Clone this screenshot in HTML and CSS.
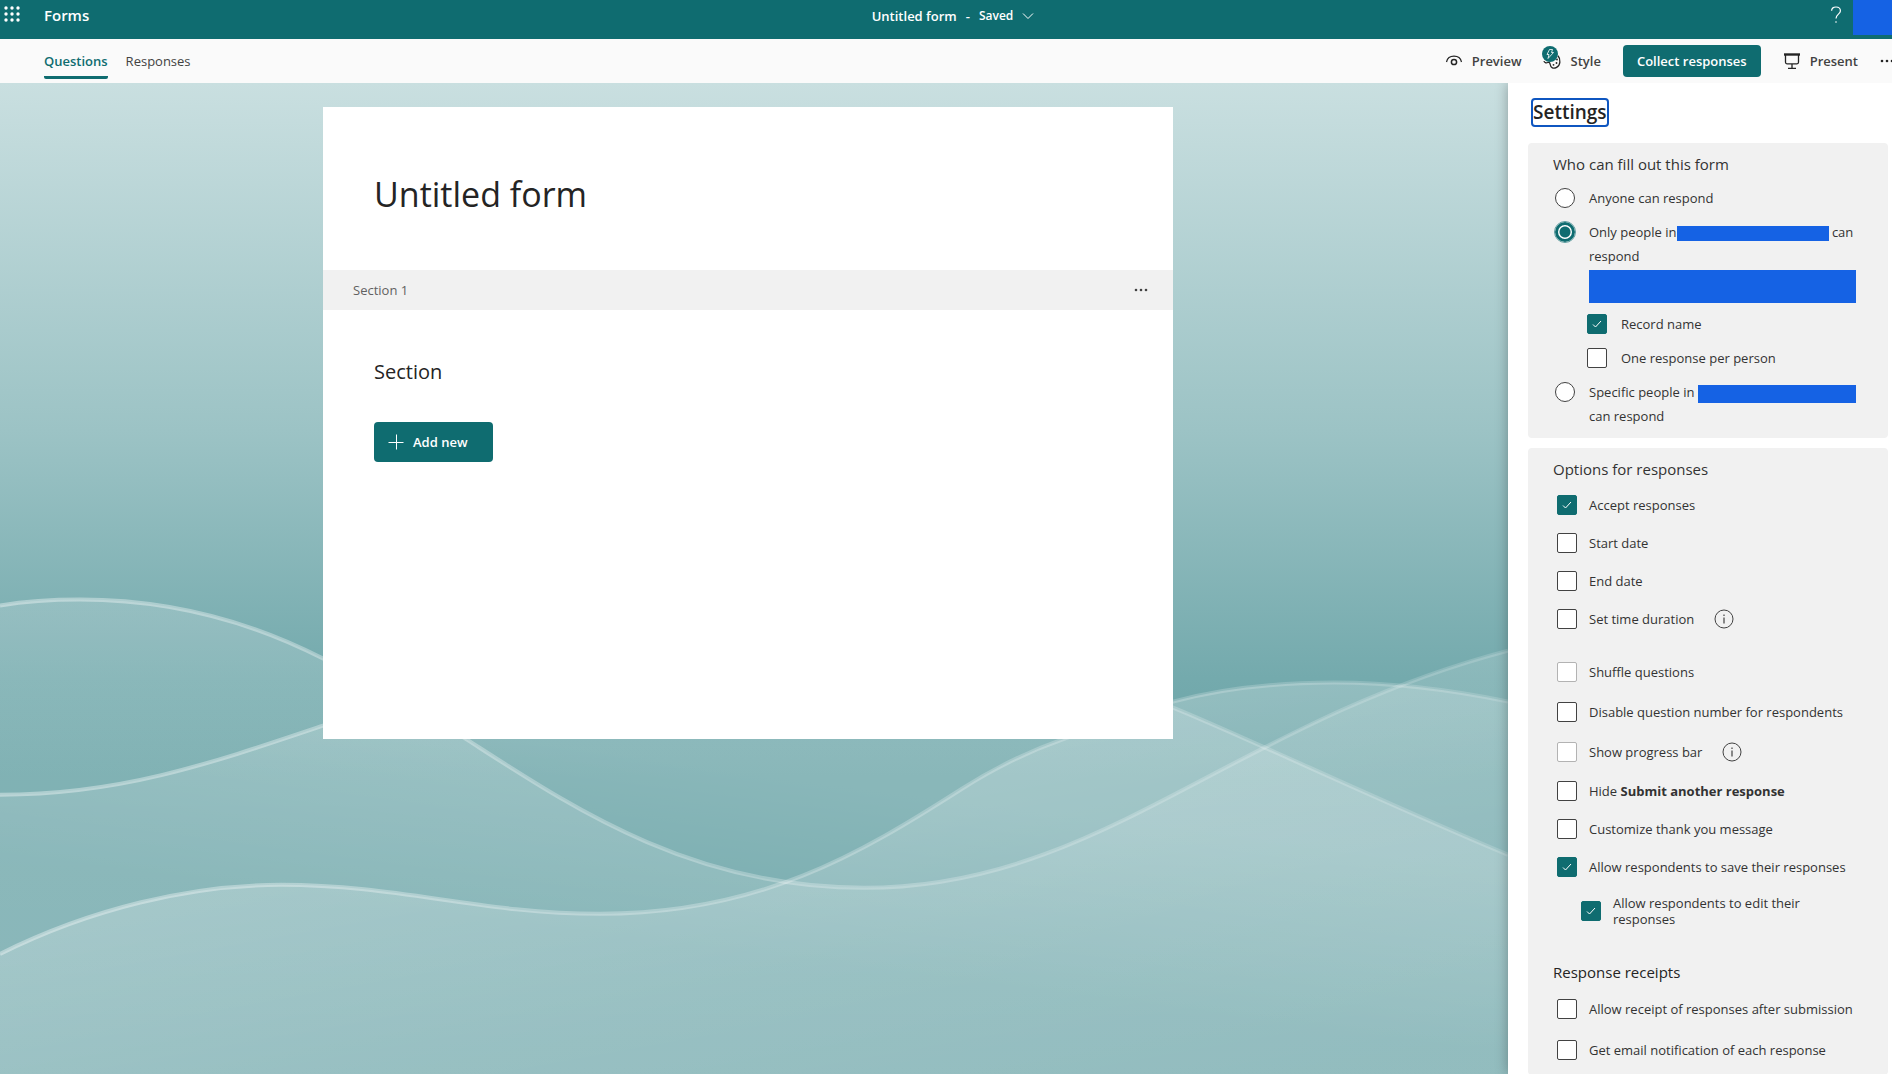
FILE: index.html
```html
<!DOCTYPE html>
<html lang="en">
<head>
<meta charset="utf-8">
<title>Untitled form</title>
<link rel="stylesheet" href="styles.css">
</head>
<body>

<header class="topbar">
  <button class="waffle" aria-label="App launcher">
    <svg width="16" height="16" viewBox="0 0 16 16" fill="#fff">
      <circle cx="2" cy="2" r="1.7"/><circle cx="8" cy="2" r="1.7"/><circle cx="14" cy="2" r="1.7"/>
      <circle cx="2" cy="8" r="1.7"/><circle cx="8" cy="8" r="1.7"/><circle cx="14" cy="8" r="1.7"/>
      <circle cx="2" cy="14" r="1.7"/><circle cx="8" cy="14" r="1.7"/><circle cx="14" cy="14" r="1.7"/>
    </svg>
  </button>
  <a class="brand" href="#">Forms</a>
  <button class="doc-title">
    <span>Untitled form</span><span>-</span><span class="saved">Saved</span>
    <svg width="12" height="8" viewBox="0 0 12 8" fill="none" stroke="#fff"><path d="M1 1.5 6 6.5 11 1.5"/></svg>
  </button>
  <button class="help" aria-label="Help">
    <svg width="12" height="18" viewBox="0 0 12 18" fill="none" stroke="#fff" stroke-width="1.2"><path d="M1.6 4.8C1.6 2.4 3.4 1 6 1s4.4 1.5 4.4 3.9C10.4 8.2 6 8.2 6 12.5"/><path d="M6 15.2v1.6"/></svg>
  </button>
  <div class="account"></div>
</header>

<nav class="toolbar">
  <a class="tab selected" href="#">Questions</a>
  <a class="tab" href="#">Responses</a>
  <div class="commands">
    <button class="command preview">
      <svg width="18" height="16" viewBox="0 0 18 16" fill="none" stroke="#242424" stroke-width="1.2"><path d="M1.5 9C2.3 5.3 5.3 3.2 9 3.2s6.7 2.1 7.5 5.8"/><circle cx="9" cy="9" r="2.6" stroke-width="1.5"/></svg>
      Preview
    </button>
    <button class="command style">
      <svg width="20" height="30" viewBox="0 0 20 30" fill="none" stroke="#242424" stroke-width="1.3">
        <path d="M2 15c.3 1.6 2 2.2 3.8 1.5 1.6-.6 2.200.4 2.400 2 .5 3.400 3.300 4.400 6 3.200 4.400-2 4.800-8.600 1.800-12"/>
        <circle cx="11.5" cy="18.8" r=".9" fill="#242424" stroke="none"/><circle cx="14.5" cy="17" r=".9" fill="#242424" stroke="none"/><circle cx="15" cy="13.5" r=".9" fill="#242424" stroke="none"/>
        <circle cx="8" cy="8" r="8" fill="#0f6c70" stroke="none"/>
        <path d="M7.5 3.5h3L9.5 6.5h2L6 12.5l1-4H5z" stroke="#fff" stroke-width=".8"/>
      </svg>
      Style
    </button>
    <button class="command collect">Collect responses</button>
    <button class="command present">
      <svg width="18" height="18" viewBox="0 0 18 18" fill="none" stroke="#242424" stroke-width="1.3"><path d="M1 2.5h16" stroke-width="2.4"/><path d="M2.5 3v7.3c0 1 .5 1.5 1.5 1.5h10c1 0 1.5-.5 1.5-1.5V3M9 12v4M5 16.3h8"/></svg>
      Present
    </button>
    <button class="more" aria-label="More options">
      <svg width="14" height="4" viewBox="0 0 14 4" fill="#242424"><circle cx="2" cy="2" r="1.3"/><circle cx="7" cy="2" r="1.3"/><circle cx="12" cy="2" r="1.3"/></svg>
    </button>
  </div>
</nav>

<div class="workspace">
  <main class="canvas">
    <svg class="waves" viewBox="0 0 1508 990" preserveAspectRatio="none">
      <defs>
        <linearGradient id="fillA" gradientUnits="userSpaceOnUse" x1="0" y1="517" x2="0" y2="990">
          <stop offset="0" stop-color="#fff" stop-opacity=".17"/><stop offset="1" stop-color="#fff" stop-opacity=".12"/>
        </linearGradient>
        <linearGradient id="fillB" gradientUnits="userSpaceOnUse" x1="0" y1="590" x2="-24" y2="775">
          <stop offset="0" stop-color="#fff" stop-opacity=".21"/><stop offset="1" stop-color="#fff" stop-opacity=".09"/>
        </linearGradient>
        <linearGradient id="fillC" gradientUnits="userSpaceOnUse" x1="0" y1="815" x2="72" y2="1215">
          <stop offset="0" stop-color="#fff" stop-opacity=".24"/><stop offset=".55" stop-color="#fff" stop-opacity=".14"/><stop offset="1" stop-color="#fff" stop-opacity=".09"/>
        </linearGradient>
        <linearGradient id="line" gradientUnits="userSpaceOnUse" x1="0" y1="0" x2="1508" y2="0">
          <stop offset="0" stop-color="#fff" stop-opacity=".38"/><stop offset="1" stop-color="#fff" stop-opacity=".16"/>
        </linearGradient>
      </defs>
      <path fill="url(#fillA)" d="M0 522C30 517 50 516 80 516C165 516 245 535 323 575C370 599 420 626 467 656C570 722 690 804 864 804C1100 804 1230 640 1508 567V990H0Z"/>
      <path fill="url(#fillB)" d="M0 711C120 711 210 680 323 642C520 570 620 530 780 530C950 530 1050 560 1173 624C1240 651 1390 722 1508 771V990H0Z"/>
      <path fill="url(#fillC)" d="M0 870C90 825 190 801 281 801C400 801 480 830 600 830C760 830 860 770 962 705C995 684 1028 668 1062 656C1110 638 1140 630 1173 618C1225 604 1280 599 1334 599C1395 599 1450 606 1508 618V990H0Z"/>
      <g fill="none" stroke="url(#line)" stroke-width="4">
        <path d="M0 522C30 517 50 516 80 516C165 516 245 535 323 575C370 599 420 626 467 656C570 722 690 804 864 804C1100 804 1230 640 1508 567"/>
        <path d="M0 711C120 711 210 680 323 642C520 570 620 530 780 530C950 530 1050 560 1173 624C1240 651 1390 722 1508 771"/>
        <path d="M0 870C90 825 190 801 281 801C400 801 480 830 600 830C760 830 860 770 962 705C995 684 1028 668 1062 656C1110 638 1140 630 1173 618C1225 604 1280 599 1334 599C1395 599 1450 606 1508 618"/>
      </g>
    </svg>
    <article class="form">
      <h1>Untitled form</h1>
      <div class="section-bar">
        <span>Section 1</span>
        <button class="more" aria-label="More options for section">
          <svg width="14" height="4" viewBox="0 0 14 4" fill="#424242"><circle cx="2" cy="2" r="1.3"/><circle cx="7" cy="2" r="1.3"/><circle cx="12" cy="2" r="1.3"/></svg>
        </button>
      </div>
      <h2>Section</h2>
      <button class="add-new">
        <svg width="16" height="16" viewBox="0 0 16 16" stroke="#fff"><path d="M.5 8.5h15M8.5.5v15"/></svg>
        Add new
      </button>
    </article>
  </main>

  <aside class="settings">
    <h2 class="settings-title" tabindex="-1">Settings</h2>

    <section class="group">
      <h3>Who can fill out this form</h3>
      <label class="option who"><input type="radio" name="who"><span>Anyone can respond</span></label>
      <label class="option who"><input type="radio" name="who" checked><span>Only people in<i class="mask org"></i> can respond</span></label>
      <div class="mask detail"></div>
      <label class="option who sub"><input type="checkbox" checked><span>Record name</span></label>
      <label class="option who sub"><input type="checkbox"><span>One response per person</span></label>
      <label class="option who"><input type="radio" name="who"><span>Specific people in <i class="mask specific"></i> can respond</span></label>
    </section>

    <section class="group">
      <h3>Options for responses</h3>
      <label class="option"><input type="checkbox" checked><span>Accept responses</span></label>
      <label class="option"><input type="checkbox"><span>Start date</span></label>
      <label class="option"><input type="checkbox"><span>End date</span></label>
      <div class="option-row">
        <label class="option"><input type="checkbox"><span>Set time duration</span></label>
        <button class="info" aria-label="About time duration">
          <svg width="20" height="20" viewBox="0 0 20 20" fill="none" stroke="#424242"><circle cx="10" cy="10" r="9"/><path d="M10 8.5v6M10 5.5v1.5" stroke-width="1.2"/></svg>
        </button>
      </div>
      <label class="option tall first"><input type="checkbox" disabled><span>Shuffle questions</span></label>
      <label class="option tall"><input type="checkbox"><span>Disable question number for respondents</span></label>
      <div class="option-row">
        <label class="option tall"><input type="checkbox" disabled><span>Show progress bar</span></label>
        <button class="info" aria-label="About progress bar">
          <svg width="20" height="20" viewBox="0 0 20 20" fill="none" stroke="#424242"><circle cx="10" cy="10" r="9"/><path d="M10 8.5v6M10 5.5v1.5" stroke-width="1.2"/></svg>
        </button>
      </div>
      <label class="option"><input type="checkbox"><span>Hide <b>Submit another response</b></span></label>
      <label class="option"><input type="checkbox"><span>Customize thank you message</span></label>
      <label class="option"><input type="checkbox" checked><span>Allow respondents to save their responses</span></label>
      <label class="option nested"><input type="checkbox" checked><span>Allow respondents to edit their responses</span></label>
      <h3 class="receipts">Response receipts</h3>
      <label class="option tall"><input type="checkbox"><span>Allow receipt of responses after submission</span></label>
      <label class="option tall"><input type="checkbox"><span>Get email notification of each response</span></label>
    </section>
  </aside>
</div>

</body>
</html>
```
FILE: styles.css
```css
* {
  box-sizing: border-box;
}

body {
  margin: 0;
  height: 100vh;
  display: flex;
  flex-direction: column;
  overflow: hidden;
  font-family: "Segoe UI", "Open Sans", sans-serif;
  font-size: 13px;
  line-height: 20px;
  color: #242424;
}

button {
  border: 0;
  padding: 0;
  background: none;
  font: inherit;
  color: inherit;
  cursor: pointer;
}

a {
  color: inherit;
  text-decoration: none;
}

svg {
  display: block;
  flex: none;
}

h1, h2, h3 {
  margin: 0;
  font-weight: 400;
}

/* top bar */

.topbar {
  display: grid;
  grid-template-columns: 44px 1fr auto 1fr 23px 39px;
  flex: none;
  height: 39px;
  background: #0f6c70;
  color: #fff;
}

.waffle {
  padding: 6px 0 0 4px;
  align-self: start;
}

.brand {
  font-size: 15px;
  font-weight: 600;
  padding-top: 5px;
}

.doc-title {
  display: flex;
  align-items: center;
  gap: 9px;
  height: 31px;
  padding-left: 32px;
  font-weight: 600;
}

.saved {
  font-size: 12px;
}

.help {
  grid-column: 5;
  align-self: start;
  padding-top: 6px;
}

.account {
  height: 35px;
  background: #1562e4;
}

/* command bar */

.toolbar {
  position: relative;
  z-index: 1;
  display: flex;
  align-items: center;
  gap: 18px;
  flex: none;
  height: 44px;
  padding-left: 44px;
  background: #fafafa;
  overflow: hidden;
}

.tab {
  height: 36px;
  padding-top: 8px;
  border-bottom: 3px solid transparent;
  color: #424242;
}

.tab.selected {
  border-bottom-color: #0f6c70;
  border-radius: 2px;
  color: #0f6c70;
  font-weight: 600;
}

.commands {
  display: flex;
  align-items: center;
  margin-left: auto;
}

.command {
  display: flex;
  align-items: center;
  gap: 9px;
  height: 32px;
  font-weight: 600;
  color: #424242;
}

.preview {
  margin-right: 20px;
}

.style {
  margin-right: 22px;
}

.collect {
  padding: 0 14px;
  margin-right: 22px;
  border-radius: 4px;
  background: #0f6c70;
  color: #fff;
}

.present {
  margin-right: 22px;
}

.commands .more {
  width: 12px;
  overflow: hidden;
}

/* form canvas */

.workspace {
  display: flex;
  flex: 1;
  min-height: 0;
}

.canvas {
  position: relative;
  flex: 1;
  padding: 24px 12px 0 0;
  background: linear-gradient(#c9dfe0, #9cc3c5 35%, #74aaad 60%, #6aa4a7 70%);
}

.waves {
  position: absolute;
  top: 0;
  left: 0;
  width: 100%;
  height: 100%;
}

.form {
  position: relative;
  max-width: 850px;
  min-height: 632px;
  margin: 0 auto;
  background: #fff;
}

.form h1 {
  padding: 63px 51px 52px;
  font-size: 34px;
  line-height: 48px;
}

.section-bar {
  display: flex;
  align-items: center;
  justify-content: space-between;
  height: 40px;
  padding: 0 25px 0 30px;
  background: #f1f1f1;
  color: #616161;
}

.form h2 {
  padding: 48px 51px 36px;
  font-size: 20px;
  line-height: 28px;
}

.add-new {
  display: flex;
  align-items: center;
  gap: 9px;
  height: 40px;
  margin-left: 51px;
  padding: 0 25px 0 14px;
  border-radius: 4px;
  background: #0f6c70;
  color: #fff;
  font-weight: 600;
}

/* settings pane */

.settings {
  position: relative;
  width: 384px;
  flex: none;
  padding: 15px 4px 0 20px;
  overflow-y: auto;
  scrollbar-width: none;
  background: #fff;
  box-shadow: 0 0 12px rgba(0, 0, 0, .3);
}

.settings-title {
  width: max-content;
  margin: 0 0 16px 3px;
  border: 2px solid #0f56c0;
  border-radius: 4px;
  font-size: 19px;
  line-height: 25px;
  font-weight: 600;
}

.group {
  margin-bottom: 10px;
  padding: 10px 20px 5px 25px;
  border-radius: 4px;
  background: #f1f1f1;
}

.group h3 {
  margin-bottom: 6px;
  font-size: 15px;
  line-height: 22px;
  color: #333;
}

.option {
  display: flex;
  align-items: center;
  gap: 12px;
  min-height: 38px;
  padding-left: 4px;
  line-height: 16px;
  color: #333;
}

.option-row {
  display: flex;
  align-items: center;
  gap: 20px;
}

.option.who {
  align-items: flex-start;
  gap: 14px;
  min-height: 34px;
  padding: 5px 0 5px 2px;
  line-height: 24px;
}

.option.who input {
  margin-top: 2px;
}

.option.who.sub {
  padding-left: 34px;
}

.option.tall {
  min-height: 40px;
}

.option.first {
  margin-top: 14px;
}

.option.nested {
  margin-top: 6px;
  padding: 3px 40px 3px 28px;
}

.receipts.receipts {
  margin: 31px 0 5px;
  color: #242424;
}

.receipts ~ .option {
  min-height: 41px;
}

input {
  appearance: none;
  flex: none;
  width: 20px;
  height: 20px;
  margin: 0;
  border: 1px solid #424242;
  border-radius: 2px;
  background: #fff center no-repeat;
}

input:disabled {
  border-color: #b3b3b3;
}

input[type="radio"] {
  border-radius: 50%;
}

input[type="radio"]:checked {
  border: 3px solid #0f6c70;
  background: radial-gradient(circle, #0f6c70 5px, #fff 6px);
  outline: 1px solid #5f9da0;
}

input[type="checkbox"]:checked {
  border-color: #0f6c70;
  background-color: #0f6c70;
  background-image: url("data:image/svg+xml,%3Csvg xmlns='http://www.w3.org/2000/svg' width='10' height='8' fill='none' stroke='white'%3E%3Cpath d='M1 4.5 3.5 7 9 1'/%3E%3C/svg%3E");
}

.mask {
  display: inline-block;
  background: #1562e4;
  vertical-align: middle;
}

.org {
  width: 152px;
  height: 15px;
}

.specific {
  width: 158px;
  height: 18px;
}

.detail {
  display: block;
  height: 33px;
  margin: -3px 12px 4px 36px;
}
```
